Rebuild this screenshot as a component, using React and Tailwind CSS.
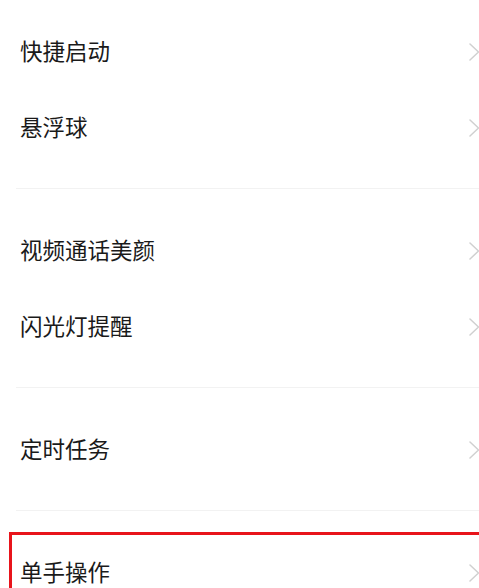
const groups = [
    { pad: 'pt-[14px]', items: ['快捷启动', '悬浮球'] },
    { pad: 'pt-6', items: ['视频通话美颜', '闪光灯提醒'] },
    { pad: 'pt-6', items: ['定时任务'] },
    { pad: 'pt-6', items: ['单手操作'], last: true },
];

const Chevron = () => (
    <svg width="11" height="18" viewBox="0 0 11 18" fill="none" className="-mr-[1px]">
        <path d="M1 1 L9.5 9 L1 17" stroke="#d0d0d0" strokeWidth="1.5" strokeLinecap="round" strokeLinejoin="round" />
    </svg>
);

const Row = ({ label }) => (
    <div className="h-[76px] flex items-center justify-between pl-[20px]">
        <span className="relative -top-[2px] text-[22.5px] leading-none text-[#1a1a1a]">{label}</span>
        <Chevron />
    </div>
);

export default function App() {
    return (
        <div
            className="relative w-[479px] h-[588px] overflow-hidden bg-white"
            style={{ fontFamily: '"Noto Sans CJK SC", "Noto Sans", sans-serif' }}
        >
            {groups.map((group, i) => (
                <div key={i}>
                    <div className={`${group.pad} ${group.last ? '' : 'pb-[22px]'}`}>
                        {group.items.map((label) => (
                            <Row key={label} label={label} />
                        ))}
                    </div>
                    {!group.last && <div className="ml-4 h-px bg-[#f2f2f2]" />}
                </div>
            ))}

            {/* red highlight annotation */}
            <div className="absolute left-[9px] top-[532px] w-[480px] h-[80px] border-[3px] border-[#e8141b]" />
        </div>
    );
}
